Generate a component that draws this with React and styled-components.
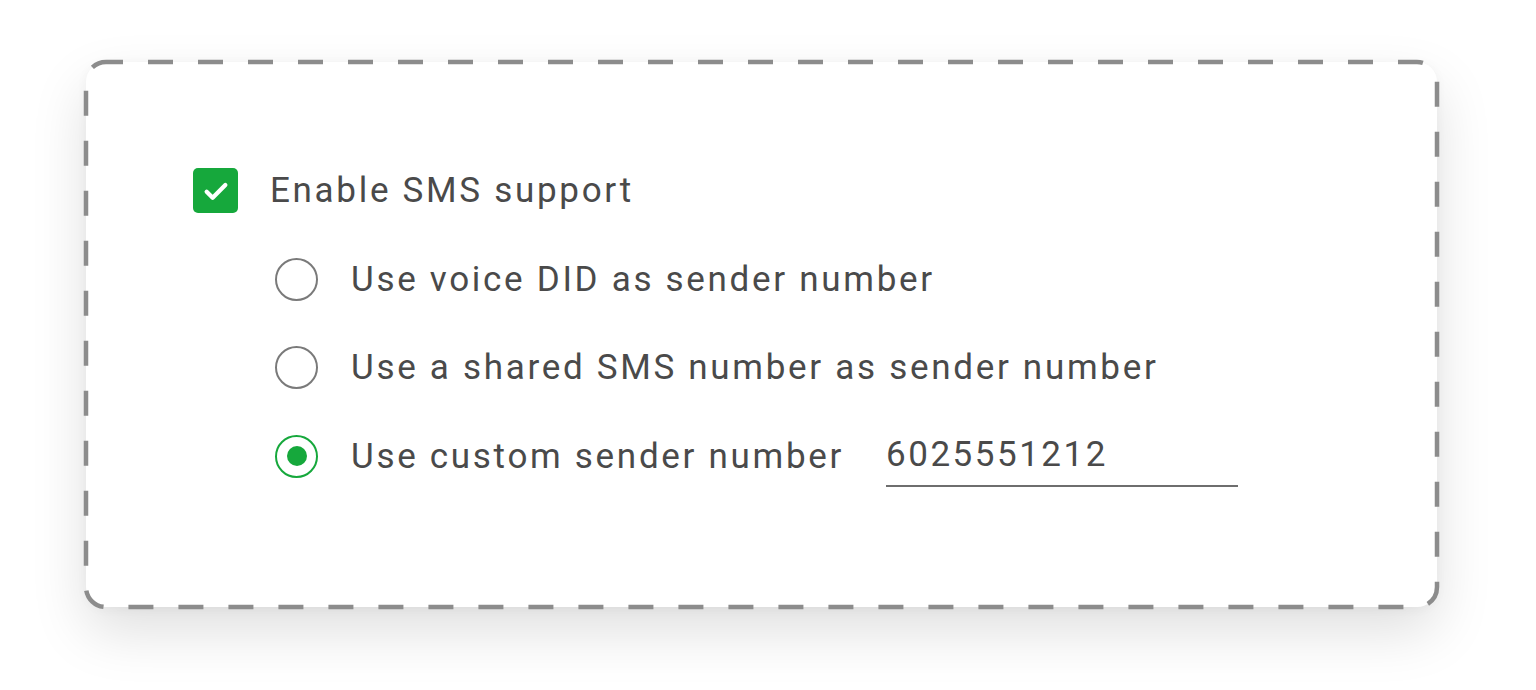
import React from 'react';
import styled, { createGlobalStyle } from 'styled-components';

const Global = createGlobalStyle`
  html, body {
    margin: 0;
    background: #ffffff;
    font-family: Roboto, "Liberation Sans", sans-serif;
  }
`;

const Page = styled.div`
  width: 1536px;
  height: 690px;
  padding: 62px 0 0 86px;
  box-sizing: border-box;
`;

const Card = styled.div`
  position: relative;
  width: 1351px;
  height: 545px;
  box-sizing: border-box;
  padding: 106px 0 0 107px;
  background: #fff;
  border-radius: 20px;
  box-shadow: 0 24px 56px rgba(0, 0, 0, 0.13), 0 2px 12px rgba(0, 0, 0, 0.04);
  display: flex;
  flex-direction: column;
  gap: 43.5px;
`;

const DashedEdge = styled.svg`
  position: absolute;
  inset: 0;
  width: 100%;
  height: 100%;
  pointer-events: none;
  overflow: visible;
`;

const Row = styled.label`
  display: flex;
  align-items: center;
  height: 45px;
  margin-left: ${p => (p.$indent ? '82px' : '0')};
  gap: ${p => (p.$indent ? '33px' : '32px')};
  color: #4a4a4a;
  font-size: 35px;
  letter-spacing: 2.7px;
  cursor: pointer;
`;

const CheckBox = styled.span`
  width: 45px;
  height: 45px;
  border-radius: 5px;
  background: #16a83c;
  display: flex;
  align-items: center;
  justify-content: center;
  flex-shrink: 0;
`;

const Radio = styled.span`
  width: 43px;
  height: 43px;
  border-radius: 50%;
  box-sizing: border-box;
  border: 2.5px solid ${p => (p.$on ? '#16a83c' : '#7a7a7a')};
  display: flex;
  align-items: center;
  justify-content: center;
  flex-shrink: 0;

  &::after {
    content: '';
    display: ${p => (p.$on ? 'block' : 'none')};
    width: 20px;
    height: 20px;
    border-radius: 50%;
    background: #16a83c;
  }
`;

const NumberInput = styled.input`
  width: 352px;
  margin-left: 9px;
  margin-top: 8px;
  padding: 0 0 10px;
  border: none;
  border-bottom: 2px solid #6e6e6e;
  outline: none;
  background: transparent;
  font-family: inherit;
  font-size: 35px;
  letter-spacing: 2.5px;
  color: #4a4a4a;
`;

const options = [
  { label: 'Use voice DID as sender number', on: false },
  { label: 'Use a shared SMS number as sender number', on: false },
  { label: 'Use custom sender number', on: true, custom: true },
];

export default function App() {
  return (
    <Page>
      <Global />
      <Card>
        <DashedEdge>
          <rect
            x="0"
            y="0"
            width="100%"
            height="100%"
            rx="20"
            ry="20"
            fill="none"
            stroke="#8c8c8c"
            strokeWidth="4.5"
            strokeDasharray="25 25"
            strokeDashoffset="8"
          />
        </DashedEdge>
        <Row>
          <CheckBox>
            <svg width="32" height="32" viewBox="0 0 24 24" fill="none" stroke="#fff" strokeWidth="3.2" strokeLinecap="round" strokeLinejoin="round">
              <path d="M5 12.5l4.5 4.5 9.5-9.5" />
            </svg>
          </CheckBox>
          Enable SMS support
        </Row>
        {options.map(o => (
          <Row $indent key={o.label}>
            <Radio $on={o.on} />
            {o.label}
            {o.custom && <NumberInput defaultValue="6025551212" />}
          </Row>
        ))}
      </Card>
    </Page>
  );
}
